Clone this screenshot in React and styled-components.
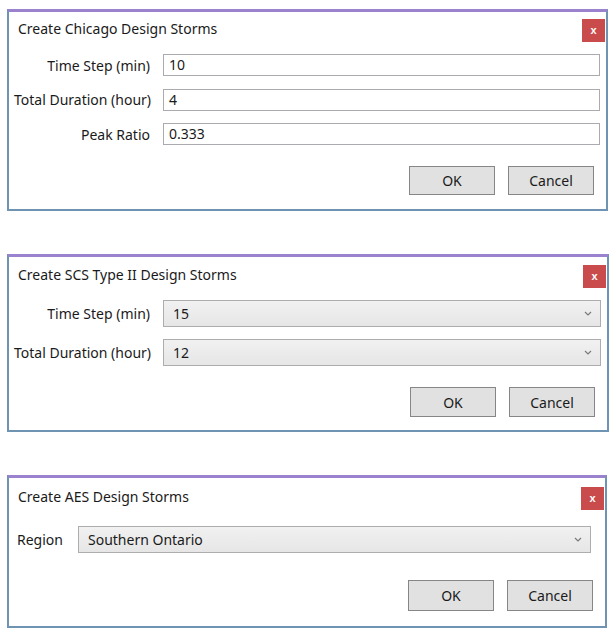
import React from "react";
import styled, { createGlobalStyle } from "styled-components";

const Global = createGlobalStyle`
  html, body { margin: 0; padding: 0; background: #ffffff; }
  body { font-family: "Noto Sans", "Open Sans", sans-serif; color: #1a1a1a; }
`;

const Page = styled.div`
  display: flex;
  flex-direction: column;
  gap: 43px;
  padding: 9px 0 0 7px;
  width: 601px;
`;

const Dialog = styled.section`
  box-sizing: border-box;
  width: ${(p) => p.$width || 601}px;
  background: #ffffff;
  border: 2px solid #6f93b3;
  border-top: 3px solid #9a82cf;
  padding: 0 0 ${(p) => p.$bottom || 14}px 0;
  display: flex;
  flex-direction: column;
`;

const Header = styled.header`
  display: flex;
  justify-content: space-between;
  align-items: flex-start;
  padding: ${(p) => p.$top || 7}px 1px 0 9px;
  height: ${(p) => 23 + (p.$top || 7)}px;
  box-sizing: border-box;
`;

const Title = styled.h1`
  margin: 0;
  padding-top: 1px;
  font-size: 14px;
  font-weight: 400;
  line-height: 18px;
  color: #1a1a1a;
`;

const Close = styled.button`
  width: 23px;
  height: 23px;
  padding: 0;
  border: none;
  background: #c94b4b;
  color: #ffffff;
  font-family: "Liberation Sans", sans-serif;
  font-weight: 700;
  font-size: 11px;
  line-height: 21px;
  text-align: center;
`;

const Form = styled.div`
  display: grid;
  grid-template-columns: ${(p) => p.$labelWidth}px 1fr;
  column-gap: ${(p) => p.$colGap}px;
  row-gap: ${(p) => p.$rowGap || 12}px;
  align-items: center;
  margin-top: ${(p) => p.$top || 12}px;
  padding: 0 ${(p) => p.$right || 6}px 0 ${(p) => p.$left || 5}px;
`;

const Label = styled.label`
  font-size: 14px;
  text-align: ${(p) => (p.$left ? "left" : "right")};
  white-space: nowrap;
  color: #1a1a1a;
`;

const TextBox = styled.div`
  box-sizing: border-box;
  height: 22px;
  border: 1px solid #a9abb0;
  background: #ffffff;
  padding: 0 5px;
  font-size: 14px;
  line-height: 20px;
  color: #1a1a1a;
`;

const Combo = styled.div`
  box-sizing: border-box;
  height: 27px;
  border: 1px solid #adadad;
  background: linear-gradient(#f1f1f1, #e6e6e6);
  padding: 0 8px 0 9px;
  font-size: 14px;
  line-height: 25px;
  color: #1a1a1a;
  display: flex;
  justify-content: space-between;
  align-items: center;
`;

const Footer = styled.footer`
  display: flex;
  justify-content: flex-end;
  gap: 13px;
  margin-top: ${(p) => p.$top || 21}px;
  padding-right: ${(p) => p.$right || 12}px;
`;

const Button = styled.button`
  box-sizing: border-box;
  width: 86px;
  height: ${(p) => p.$h || 29}px;
  border: 1px solid #868686;
  background: #e1e1e1;
  font-family: inherit;
  font-size: 14px;
  color: #1a1a1a;
  padding: 0;
`;

const Chevron = () => (
  <svg width="8" height="5" viewBox="0 0 8 5">
    <polyline points="1,1 4,4 7,1" fill="none" stroke="#7a7a7a" strokeWidth="1.2" />
  </svg>
);

const Select = ({ value }) => (
  <Combo>
    <span>{value}</span>
    <Chevron />
  </Combo>
);

const Buttons = ({ top, h, right }) => (
  <Footer $top={top} $right={right}>
    <Button $h={h}>OK</Button>
    <Button $h={h}>Cancel</Button>
  </Footer>
);

export default function App() {
  return (
    <>
      <Global />
      <Page>
        <Dialog>
          <Header>
            <Title>Create Chicago Design Storms</Title>
            <Close>x</Close>
          </Header>
          <Form $labelWidth={136} $colGap={13} $rowGap={12.5}>
            <Label>Time Step (min)</Label>
            <TextBox>10</TextBox>
            <Label>Total Duration (hour)</Label>
            <TextBox>4</TextBox>
            <Label>Peak Ratio</Label>
            <TextBox>0.333</TextBox>
          </Form>
          <Buttons />
        </Dialog>

        <Dialog $width={602} $bottom={13}>
          <Header $top={8}>
            <Title>Create SCS Type II Design Storms</Title>
            <Close>x</Close>
          </Header>
          <Form $labelWidth={136} $colGap={13} $right={6}>
            <Label>Time Step (min)</Label>
            <Select value="15" />
            <Label>Total Duration (hour)</Label>
            <Select value="12" />
          </Form>
          <Buttons h={30} />
        </Dialog>

        <Dialog $width={600} $bottom={15}>
          <Header $top={9}>
            <Title>Create AES Design Storms</Title>
            <Close>x</Close>
          </Header>
          <Form $labelWidth={48} $colGap={13} $left={8} $right={14} $top={16}>
            <Label $left>Region</Label>
            <Select value="Southern Ontario" />
          </Form>
          <Buttons top={27} h={31} right={12} />
        </Dialog>
      </Page>
    </>
  );
}
